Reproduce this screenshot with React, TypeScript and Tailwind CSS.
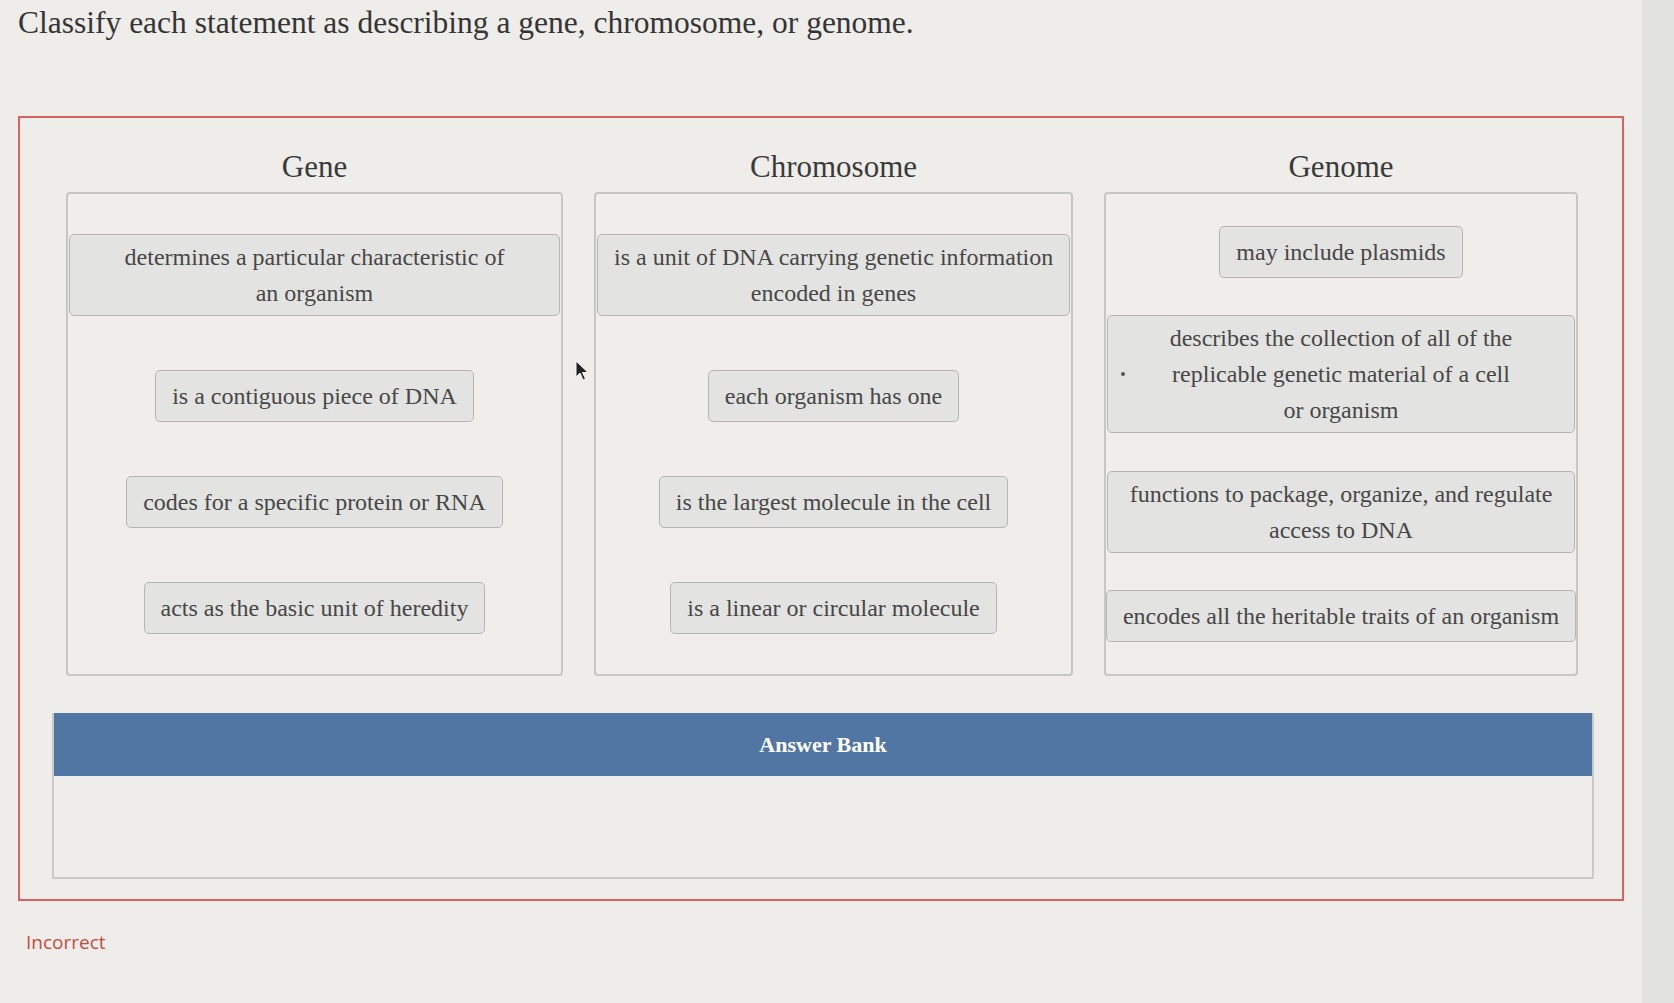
import React from 'react';

type Card = { lines: string[]; full?: boolean; dot?: boolean };
type Column = { title: string; cards: Card[]; pad: string };

const columns: Column[] = [
  {
    title: 'Gene',
    pad: 'py-[40px]',
    cards: [
      { lines: ['determines a particular characteristic of', 'an organism'], full: true },
      { lines: ['is a contiguous piece of DNA'] },
      { lines: ['codes for a specific protein or RNA'] },
      { lines: ['acts as the basic unit of heredity'] },
    ],
  },
  {
    title: 'Chromosome',
    pad: 'py-[40px]',
    cards: [
      { lines: ['is a unit of DNA carrying genetic information', 'encoded in genes'], full: true },
      { lines: ['each organism has one'] },
      { lines: ['is the largest molecule in the cell'] },
      { lines: ['is a linear or circular molecule'] },
    ],
  },
  {
    title: 'Genome',
    pad: 'py-[32px]',
    cards: [
      { lines: ['may include plasmids'] },
      {
        lines: ['describes the collection of all of the', 'replicable genetic material of a cell', 'or organism'],
        full: true,
        dot: true,
      },
      { lines: ['functions to package, organize, and regulate', 'access to DNA'], full: true },
      { lines: ['encodes all the heritable traits of an organism'] },
    ],
  },
];

const serif = { fontFamily: '"Liberation Serif", "Times New Roman", serif' };

const AnswerCard: React.FC<{ card: Card }> = ({ card }) => (
  <div
    className={`relative rounded-[5px] border border-[#b5b5b3] bg-[#e3e3e1] px-4 text-center text-[24px] leading-[36px] text-[#474747] ${
      card.full ? 'self-stretch py-[4px]' : 'self-center py-[7px]'
    }`}
  >
    {card.dot && <span className="absolute left-[13px] top-[56px] h-[4px] w-[4px] rounded-full bg-[#555]"></span>}
    {card.lines.map((l, i) => (
      <div key={i} className="whitespace-nowrap">
        {l}
      </div>
    ))}
  </div>
);

const App: React.FC = () => {
  return (
    <div className="relative flex min-h-screen bg-[#eeede9]" style={serif}>
      <div className="flex-1 px-[18px]">
        {/* Question */}
        <h1 className="pt-[3px] text-[31.5px] leading-[40px] text-[#353535]">
          Classify each statement as describing a gene, chromosome, or genome.
        </h1>

        {/* Outlined work area */}
        <div className="mt-[73px] w-[1606px] border-2 border-[#d8625f] pb-[20px] pl-[32px] pr-[28px] pt-[29px]">
          <div className="grid grid-cols-[497px_479px_474px] gap-[31px] pl-[14px]">
            {columns.map((col) => (
              <div key={col.title} className="flex flex-col">
                <div className="mb-[5px] text-center text-[31px] leading-[40px] text-[#3a3a3a]">{col.title}</div>
                <div
                  className={`flex h-[484px] flex-col justify-between rounded-[4px] border-2 border-[#c6c6c4] bg-[#efeeea] px-[1px] ${col.pad}`}
                >
                  {col.cards.map((c, i) => (
                    <AnswerCard key={i} card={c} />
                  ))}
                </div>
              </div>
            ))}
          </div>

          {/* Answer bank */}
          <div className="mt-[37px] border-2 border-t-0 border-[#c9c9c7]">
            <div className="flex h-[63px] items-center justify-center bg-[#5276a3] text-[22px] font-bold text-white">
              Answer Bank
            </div>
            <div className="h-[101px] bg-[#eeede9]"></div>
          </div>
        </div>

        <p
          className="mt-[27px] pl-[8px] text-[19px] font-medium text-[#c64a3e]"
          style={{ fontFamily: '"Open Sans", "Noto Sans", sans-serif' }}
        >
          Incorrect
        </p>
      </div>

      {/* right scroll track */}
      <div className="w-[32px] shrink-0 bg-[#e2e2df]"></div>

      {/* mouse pointer */}
      <svg className="absolute left-[575px] top-[360px]" width="14" height="22" viewBox="0 0 14 22">
        <path d="M1 1 L1 17 L5 13 L8 20 L10.5 19 L7.5 12.5 L13 12.5 Z" fill="#222" stroke="#f5f5f5" strokeWidth="1" />
      </svg>
    </div>
  );
};

export default App;
